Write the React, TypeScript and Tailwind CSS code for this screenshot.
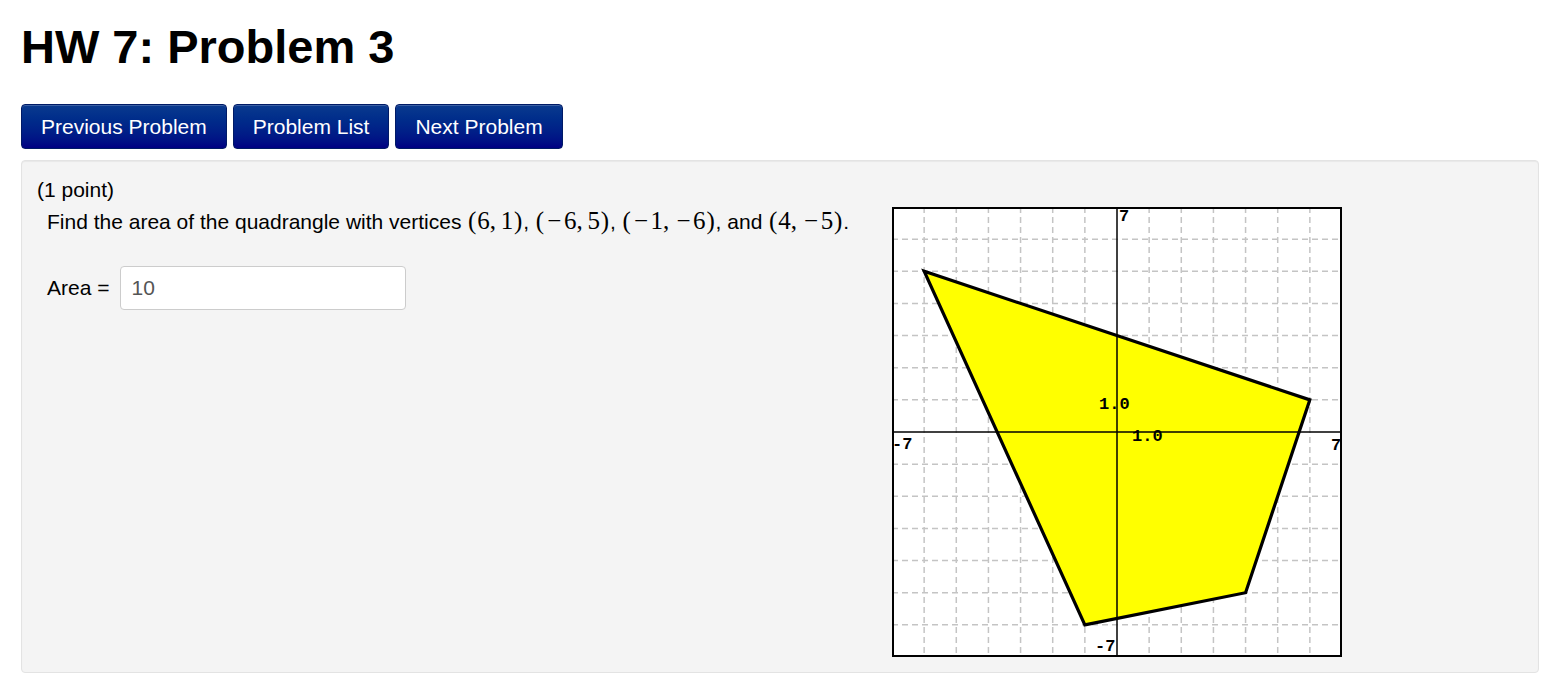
import React from 'react';

const S = 450 / 14;
const px = (x: number) => 225 + x * S;
const py = (y: number) => 225 - y * S;

const vertices: [number, number][] = [
  [6, 1],
  [-6, 5],
  [-1, -6],
  [4, -5],
];

function Graph() {
  const ticks = [-6, -5, -4, -3, -2, -1, 1, 2, 3, 4, 5, 6];
  const pts = vertices.map(([x, y]) => `${px(x)},${py(y)}`).join(' ');
  return (
    <svg width={450} height={450} viewBox="0 0 450 450" className="block shrink-0 bg-white">
      {ticks.map((t) => (
        <g key={t} stroke="#c4c4c4" strokeWidth={1.5} strokeDasharray="6 4">
          <line x1={px(t)} y1={0} x2={px(t)} y2={450} />
          <line x1={0} y1={py(t)} x2={450} y2={py(t)} />
        </g>
      ))}
      <polygon points={pts} fill="#ffff00" stroke="none" />
      <line x1={225} y1={0} x2={225} y2={450} stroke="#000" strokeWidth={1.5} />
      <line x1={0} y1={225} x2={450} y2={225} stroke="#000" strokeWidth={1.5} />
      <polygon points={pts} fill="none" stroke="#000" strokeWidth={3.2} strokeLinejoin="miter" />
      <g fontFamily="'Liberation Mono', monospace" fontWeight="bold" fontSize={17} fill="#000">
        <text x={227} y={14}>7</text>
        <text x={0} y={242}>-7</text>
        <text x={439} y={243}>7</text>
        <text x={203} y={444}>-7</text>
        <text x={207} y={202}>1.0</text>
        <text x={240} y={234}>1.0</text>
      </g>
      <rect x={1} y={1} width={448} height={448} fill="none" stroke="#000" strokeWidth={2} />
    </svg>
  );
}

// renders a coordinate pair with TeX-like widths for parens, minus and comma
function Pt({ a, b }: { a: string; b: string }) {
  const num = (s: string) =>
    s.startsWith('-') ? (
      <>
        <span className="inline-block w-[19px] text-center">−</span>
        {s.slice(1)}
      </>
    ) : (
      s
    );
  return (
    <span className="text-[25px] whitespace-nowrap" style={{ fontFamily: "'Liberation Serif', 'Times New Roman', serif" }}>
      <span className="inline-block w-[10px] text-center">(</span>
      {num(a)}
      <span className="inline-block w-[11px]">,</span>
      {num(b)}
      <span className="inline-block w-[10px] text-center">)</span>
    </span>
  );
}

export default function App() {
  const btn =
    'h-[45px] px-[19px] rounded-[4px] border border-[#001a66] bg-gradient-to-b from-[#0b3a8e] to-[#000083] text-white text-[21px] leading-none shadow-[inset_0_1px_0_rgba(255,255,255,0.2)]';
  return (
    <div className="min-h-screen bg-white text-black px-[21px] pb-5" style={{ fontFamily: "'Liberation Sans', Arial, sans-serif" }}>
      <h1 className="pt-[20px] text-[47px] font-bold leading-[53px]">HW 7: Problem 3</h1>
      <div className="mt-[31px] flex gap-[6px]">
        <button className={btn}>Previous Problem</button>
        <button className={btn}>Problem List</button>
        <button className={btn}>Next Problem</button>
      </div>
      <div className="mt-[11px] w-[1518px] rounded-[4px] border border-[#e3e3e3] bg-[#f4f4f4] px-[15px] pt-[16px] pb-[15px] shadow-[inset_0_1px_1px_rgba(0,0,0,0.05)]">
        <div className="text-[21px] leading-[26px]">(1 point)</div>
        <div className="flex">
          <div className="w-[855px] pl-[10px] text-[21px]">
            <div className="mt-[3px] leading-[30px]">
              Find the area of the quadrangle with vertices <Pt a="6" b="1" />, <Pt a="-6" b="5" />,{' '}
              <Pt a="-1" b="-6" />, and <Pt a="4" b="-5" />.
            </div>
            <div className="mt-[29px] flex items-center gap-[11px]">
              <span>Area =</span>
              <div className="h-[44px] w-[286px] rounded-[4px] border border-[#cccccc] bg-white px-[10px] flex items-center text-[#555555]">
                10
              </div>
            </div>
          </div>
          <div className="mt-[4px]">
            <Graph />
          </div>
        </div>
      </div>
    </div>
  );
}
